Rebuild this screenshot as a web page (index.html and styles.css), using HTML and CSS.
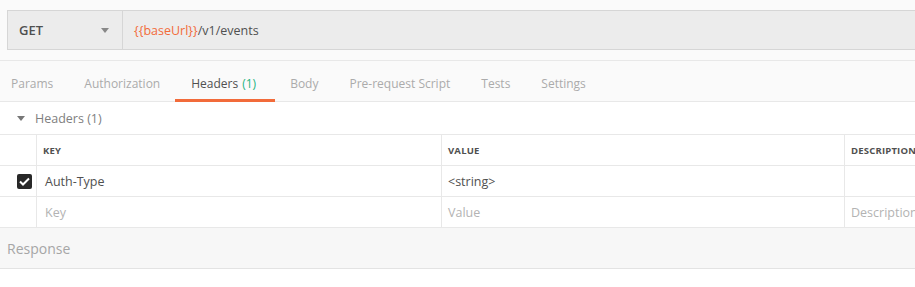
FILE: index.html
```html
<!DOCTYPE html>
<html lang="en">
<head>
  <meta charset="UTF-8">
  <title>Request</title>
  <link rel="stylesheet" href="styles.css">
</head>
<body>
  <div class="request-bar">
    <div class="url-box">
      <div class="method">
        <span>GET</span>
        <svg class="caret" width="8" height="5" viewBox="0 0 8 5"><path d="M0 0h8L4 5z" fill="#888"/></svg>
      </div>
      <div class="url"><span class="var">{{baseUrl}}</span>/v1/events</div>
    </div>
  </div>
  <div class="tabs">
    <div class="tab">Params</div>
    <div class="tab">Authorization</div>
    <div class="tab active">Headers <span class="count">(1)</span></div>
    <div class="tab">Body</div>
    <div class="tab">Pre-request Script</div>
    <div class="tab">Tests</div>
    <div class="tab">Settings</div>
  </div>
  <div class="section-title">
    <svg width="8" height="5" viewBox="0 0 8 5"><path d="M0 0h8L4 5z" fill="#777"/></svg>
    <span>Headers (1)</span>
  </div>
  <div class="kv-table">
    <div class="row head">
      <div class="cell check"></div>
      <div class="cell key">KEY</div>
      <div class="cell value">VALUE</div>
      <div class="cell desc">DESCRIPTION</div>
    </div>
    <div class="row">
      <div class="cell check">
        <span class="box"><svg width="11" height="9" viewBox="0 0 11 9"><path d="M1 4.5l3 3L10 1.5" stroke="#fff" stroke-width="2" fill="none"/></svg></span>
      </div>
      <div class="cell key">Auth-Type</div>
      <div class="cell value">&lt;string&gt;</div>
      <div class="cell desc"></div>
    </div>
    <div class="row placeholder">
      <div class="cell check"></div>
      <div class="cell key">Key</div>
      <div class="cell value">Value</div>
      <div class="cell desc">Description</div>
    </div>
  </div>
  <div class="response">Response</div>
</body>
</html>
```

FILE: styles.css
```css
body { margin: 0; font-family: "Open Sans", sans-serif; font-size: 12px; color: #505050; background: #fff; }

.request-bar { background: #fafafa; padding: 10px 0 10px 7px; border-bottom: 1px solid #e8e8e8; }
.url-box { display: flex; height: 38px; background: #ececec; border: 1px solid #d6d6d6; border-right: none; }
.method { width: 115px; display: flex; align-items: center; justify-content: space-between; padding: 0 13px 0 11px; box-sizing: border-box; border-right: 1px solid #d6d6d6; font-size: 13px; font-weight: 600; color: #505050; }
.url { display: flex; align-items: center; padding-left: 11px; font-size: 12.5px; color: #505050; }
.url .var { color: #f26b3a; }

.tabs { display: flex; gap: 31px; height: 36px; padding: 4px 0 0 11px; background: #fafafa; border-bottom: 1px solid #e8e8e8; }
.tab { position: relative; display: flex; align-items: center; color: #ababab; font-size: 12px; }
.tab.active { color: #505050; margin-right: 3px; }
.tab .count { color: #26b47f; margin-left: 4px; }
.tab.active::after { content: ""; position: absolute; left: -16px; right: -19px; bottom: -1px; height: 3px; background: #f26b3a; }

.section-title { display: flex; align-items: center; height: 32px; padding-left: 17px; gap: 10px; color: #808080; font-size: 12.5px; }

.kv-table { border-top: 1px solid #e8e8e8; }
.row { display: flex; height: 30px; border-bottom: 1px solid #e8e8e8; }
.cell { display: flex; align-items: center; padding-left: 8px; box-sizing: border-box; font-size: 12.5px; white-space: nowrap; overflow: hidden; }
.cell.check { width: 37px; padding-left: 17px; border-right: 1px solid #e8e8e8; }
.cell.key { width: 405px; border-right: 1px solid #e8e8e8; }
.cell.value { width: 403px; border-right: 1px solid #e8e8e8; padding-left: 6px; }
.cell.desc { flex: 1; padding-left: 6px; }
.row.head .cell { font-size: 9.5px; font-weight: 700; color: #505050; letter-spacing: 0.2px; }
.row.head .cell.key { padding-left: 6px; }
.row.placeholder .cell { color: #b3b3b3; }
.box { width: 15px; height: 15px; background: #282828; border-radius: 2px; display: flex; align-items: center; justify-content: center; }

.response { height: 40px; display: flex; align-items: center; padding-left: 7px; background: #f7f7f7; border-bottom: 1px solid #e3e3e3; color: #a6a6a6; font-size: 14px; }
```
